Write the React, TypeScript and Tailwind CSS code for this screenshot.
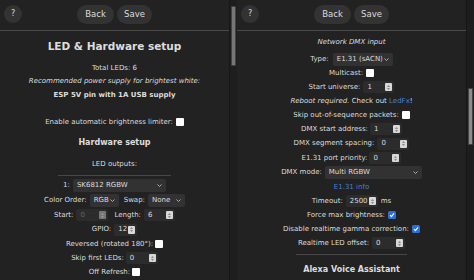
import React from "react";
import clsx from "clsx";

const Chevron = () => (
	<svg width="5" height="3" viewBox="0 0 5 3" className="shrink-0">
		<polyline points="0.5,0.5 2.5,2.5 4.5,0.5" fill="none" stroke="#bbb" strokeWidth="0.9" />
	</svg>
);

const Select: React.FC<{ children: React.ReactNode; className?: string }> = ({ children, className }) => (
	<span className={clsx("inline-flex items-center justify-between h-[13px] bg-[#323232] rounded-[2px] pl-[4px] pr-[4px]", className)}>
		<span>{children}</span>
		<Chevron />
	</span>
);

const Spinner: React.FC<{ disabled?: boolean }> = ({ disabled }) => (
	<span
		className={clsx(
			"flex flex-col items-center justify-center gap-[1px] w-[7px] h-[8px] rounded-[1px]",
			disabled ? "bg-[#777]" : "bg-[#d8d8d8]"
		)}
	>
		<svg width="3" height="2" viewBox="0 0 3 2">
			<polygon points="0,2 1.5,0 3,2" fill={disabled ? "#999" : "#888"} />
		</svg>
		<svg width="3" height="2" viewBox="0 0 3 2">
			<polygon points="0,0 1.5,2 3,0" fill={disabled ? "#999" : "#888"} />
		</svg>
	</span>
);

const NumInput: React.FC<{ value: string; className?: string; disabled?: boolean }> = ({ value, className, disabled }) => (
	<span className={clsx("inline-flex items-center justify-between h-[12px] bg-[#2c2c2c] rounded-[2px] pl-[4px] pr-[2px]", className)}>
		<span className={disabled ? "text-[#666]" : ""}>{value}</span>
		<Spinner disabled={disabled} />
	</span>
);

const Box: React.FC<{ checked?: boolean }> = ({ checked }) =>
	checked ? (
		<span className="inline-flex items-center justify-center w-[8px] h-[8px] rounded-[1.5px] bg-[#2a6fdb]">
			<svg width="6" height="6" viewBox="0 0 6 6">
				<polyline points="1,3.2 2.4,4.6 5,1.4" fill="none" stroke="#fff" strokeWidth="1.1" />
			</svg>
		</span>
	) : (
		<span className="inline-block w-[8px] h-[8px] rounded-[1px] bg-white" />
	);

const Row: React.FC<{ children: React.ReactNode; className?: string }> = ({ children, className }) => (
	<div className={clsx("flex items-center justify-center whitespace-nowrap", className)}>{children}</div>
);

const TopBar = () => (
	<div className="grid grid-cols-[1fr_auto_1fr] items-center h-[31px] pb-[2px] border-b border-[#4a4a4a]">
		<span className="justify-self-start ml-[4px] flex items-center justify-center w-[18px] h-[18px] rounded-full bg-[#333] text-[8px]">
			?
		</span>
		<div className="flex items-center gap-[3px]">
			<span className="flex items-center justify-center h-[19px] w-[37px] rounded-full bg-[#333] text-[8.5px]">Back</span>
			<span className="flex items-center justify-center h-[19px] w-[35px] rounded-full bg-[#333] text-[8.5px]">Save</span>
		</div>
		<span />
	</div>
);

const Scrollbar: React.FC<{ top: string; height: string; light?: boolean }> = ({ top, height, light }) => (
	<div className="w-[8px] h-full bg-[#1e1e1e] border-l border-[#171717] flex flex-col">
		<div className={top} />
		<div className={clsx("mx-[1px] rounded-[1px] border border-[#444]", height, light ? "bg-[#8c8c8c]" : "bg-[#767676]")} />
	</div>
);

const LeftPanel = () => (
	<div className="w-[229px] h-full overflow-hidden">
		<TopBar />
		<Row className="h-[30px] text-[10.5px] font-bold">LED &amp; Hardware setup</Row>
		<Row className="h-[14px]">Total LEDs: 6</Row>
		<Row className="h-[13px] italic">Recommended power supply for brightest white:</Row>
		<Row className="h-[14px] font-bold">ESP 5V pin with 1A USB supply</Row>
		<Row className="h-[14px] mt-[13px] gap-[3px]">
			Enable automatic brightness limiter: <Box />
		</Row>
		<Row className="h-[28px] text-[8px] font-bold">Hardware setup</Row>
		<Row className="h-[15px]">LED outputs:</Row>
		<div className="mt-[3px] mb-[2px] h-px w-[113px] mx-auto bg-[#474747]" />
		<Row className="h-[15px] gap-[3px]">
			1: <Select className="w-[93px]">SK6812 RGBW</Select>
		</Row>
		<Row className="h-[15px] gap-[3px]">
			Color Order: <Select className="w-[29px]">RGB</Select>
			<span className="ml-[2px]">Swap:</span> <Select className="w-[37px]">None</Select>
		</Row>
		<Row className="h-[14px] gap-[3px]">
			Start: <NumInput value="0" disabled className="w-[32px]" />
			<span className="ml-[3px]">Length:</span> <NumInput value="6" className="w-[31px]" />
		</Row>
		<Row className="h-[15px] gap-[3px]">
			GPIO: <NumInput value="12" className="w-[23px]" />
		</Row>
		<Row className="h-[14px] gap-[2px]">
			Reversed (rotated 180°): <Box />
		</Row>
		<Row className="h-[14px] gap-[2px]">
			Skip first LEDs: <NumInput value="0" className="w-[32px]" />
		</Row>
		<Row className="h-[14px] gap-[2px]">
			Off Refresh: <Box />
		</Row>
	</div>
);

const RightPanel = () => (
	<div className="w-[229px] h-full overflow-hidden">
		<TopBar />
		<Row className="h-[21px] pt-[1px] italic">Network DMX input</Row>
		<Row className="h-[14px] gap-[4px]">
			Type: <Select className="w-[60px]">E1.31 (sACN)</Select>
		</Row>
		<Row className="h-[14px] gap-[3px]">
			Multicast: <Box />
		</Row>
		<Row className="h-[14px] gap-[3px]">
			Start universe: <NumInput value="1" className="w-[31px]" />
		</Row>
		<Row className="h-[14px]">
			<span className="italic">Reboot required.</span>&nbsp;Check out&nbsp;<span className="text-[#4a7fd6]">LedFx</span>!
		</Row>
		<Row className="h-[14px] gap-[3px]">
			Skip out-of-sequence packets: <Box />
		</Row>
		<Row className="h-[14px] gap-[2px]">
			DMX start address: <NumInput value="1" className="w-[32px]" />
		</Row>
		<Row className="h-[15px] gap-[3px]">
			DMX segment spacing: <NumInput value="0" className="w-[32px]" />
		</Row>
		<Row className="h-[14px] gap-[2px]">
			E1.31 port priority: <NumInput value="0" className="w-[32px]" />
		</Row>
		<Row className="h-[15px] gap-[3px]">
			DMX mode: <Select className="w-[97px]">Multi RGBW</Select>
		</Row>
		<Row className="h-[14px] text-[#4a7fd6]">E1.31 info</Row>
		<Row className="h-[14px] gap-[3px]">
			Timeout: <NumInput value="2500" className="w-[32px]" /> ms
		</Row>
		<Row className="h-[14px] gap-[3px]">
			Force max brightness: <Box checked />
		</Row>
		<Row className="h-[14px] gap-[3px]">
			Disable realtime gamma correction: <Box checked />
		</Row>
		<Row className="h-[14px] gap-[3px]">
			Realtime LED offset: <NumInput value="0" className="w-[33px]" />
		</Row>
		<div className="mt-[4px] mb-[2px] h-px w-[111px] mx-auto bg-[#474747]" />
		<Row className="h-[26px] text-[8px] font-bold">Alexa Voice Assistant</Row>
	</div>
);

export default function App() {
	return (
		<div className="w-[474px] h-[280px] overflow-hidden flex bg-[#222] text-[#ddd] text-[7px] leading-none font-['DejaVu_Sans',Verdana,sans-serif]">
			<LeftPanel />
			<Scrollbar top="h-[6px]" height="h-[60px]" />
			<RightPanel />
			<Scrollbar top="h-[88px]" height="h-[57px]" light />
		</div>
	);
}
